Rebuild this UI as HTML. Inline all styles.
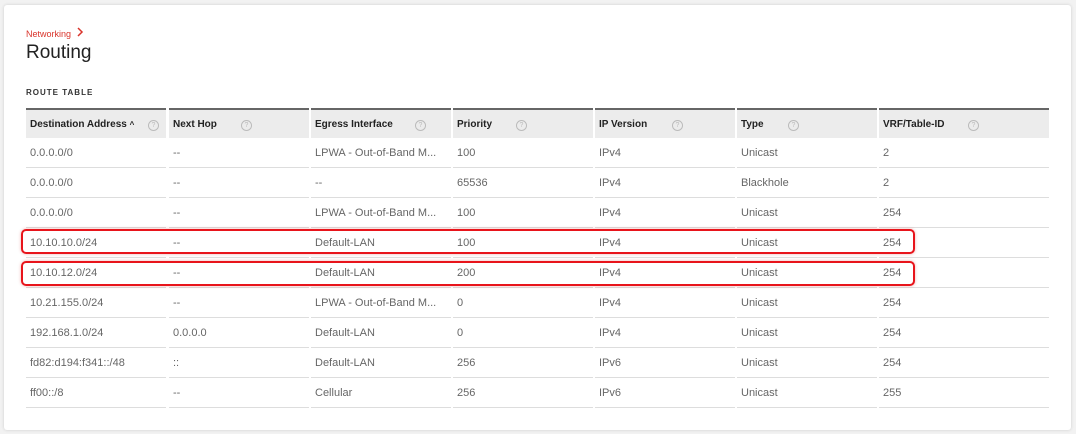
<html><head><style>
body{margin:0;background:#f2f2f2;font-family:"Liberation Sans",Arial,sans-serif;width:1076px;height:434px;overflow:hidden;position:relative}
.card{position:absolute;left:4px;top:5px;width:1067px;height:425px;background:#fff;border-radius:3px;box-shadow:0 0 3px rgba(0,0,0,.15)}
.bc{position:absolute;left:26px;top:29px;font-size:9px;color:#d9342b}
.bc svg{position:absolute;left:50px;top:-2px}
h1{position:absolute;left:26px;top:42px;margin:0;font-size:19px;font-weight:normal;color:#222}
.rt{position:absolute;left:26px;top:88px;font-size:8px;font-weight:bold;letter-spacing:1px;color:#333}
.col{position:absolute;top:108px;width:140px}
.h{height:28px;border-top:2px solid #666;background:#ececec;font-size:10px;font-weight:bold;color:#222;line-height:30px;padding-left:4px;position:relative}
.q{position:absolute;top:10px;width:9px;height:9px;border:1px solid #bbb;border-radius:50%;font-size:7px;line-height:9px;text-align:center;color:#bbb;font-weight:normal}
.c{height:29px;border-bottom:1px solid #ddd;font-size:11px;color:#666;line-height:30px;padding-left:4px;white-space:nowrap;overflow:hidden}
.red{position:absolute;left:21px;width:890px;height:21px;border:2px solid #e8141b;border-radius:5px;box-shadow:0 0 3px rgba(200,0,0,.3)}
</style></head><body><div class="card"></div>
<div class="bc">Networking<svg width="8" height="10" viewBox="0 0 8 10"><path d="M2 1l4 4-4 4" stroke="#d9342b" stroke-width="1.5" fill="none"/></svg></div>
<h1>Routing</h1><div class="rt">ROUTE TABLE</div>
<div class="col" style="left:26px"><div class="h">Destination Address <span style="font-size:8px">^</span><span class="q" style="left:122px">?</span></div>
<div class="c">0.0.0.0/0</div><div class="c">0.0.0.0/0</div><div class="c">0.0.0.0/0</div><div class="c">10.10.10.0/24</div><div class="c">10.10.12.0/24</div><div class="c">10.21.155.0/24</div><div class="c">192.168.1.0/24</div><div class="c">fd82:d194:f341::/48</div><div class="c">ff00::/8</div></div>
<div class="col" style="left:169px"><div class="h">Next Hop<span class="q" style="left:72px">?</span></div>
<div class="c">--</div><div class="c">--</div><div class="c">--</div><div class="c">--</div><div class="c">--</div><div class="c">--</div><div class="c">0.0.0.0</div><div class="c">::</div><div class="c">--</div></div>
<div class="col" style="left:311px"><div class="h">Egress Interface<span class="q" style="left:104px">?</span></div>
<div class="c">LPWA - Out-of-Band M...</div><div class="c">--</div><div class="c">LPWA - Out-of-Band M...</div><div class="c">Default-LAN</div><div class="c">Default-LAN</div><div class="c">LPWA - Out-of-Band M...</div><div class="c">Default-LAN</div><div class="c">Default-LAN</div><div class="c">Cellular</div></div>
<div class="col" style="left:453px"><div class="h">Priority<span class="q" style="left:63px">?</span></div>
<div class="c">100</div><div class="c">65536</div><div class="c">100</div><div class="c">100</div><div class="c">200</div><div class="c">0</div><div class="c">0</div><div class="c">256</div><div class="c">256</div></div>
<div class="col" style="left:595px"><div class="h">IP Version<span class="q" style="left:77px">?</span></div>
<div class="c">IPv4</div><div class="c">IPv4</div><div class="c">IPv4</div><div class="c">IPv4</div><div class="c">IPv4</div><div class="c">IPv4</div><div class="c">IPv4</div><div class="c">IPv6</div><div class="c">IPv6</div></div>
<div class="col" style="left:737px"><div class="h">Type<span class="q" style="left:51px">?</span></div>
<div class="c">Unicast</div><div class="c">Blackhole</div><div class="c">Unicast</div><div class="c">Unicast</div><div class="c">Unicast</div><div class="c">Unicast</div><div class="c">Unicast</div><div class="c">Unicast</div><div class="c">Unicast</div></div>
<div class="col" style="left:879px;width:170px"><div class="h">VRF/Table-ID<span class="q" style="left:89px">?</span></div>
<div class="c">2</div><div class="c">2</div><div class="c">254</div><div class="c">254</div><div class="c">254</div><div class="c">254</div><div class="c">254</div><div class="c">254</div><div class="c">255</div></div>
<div class="red" style="top:229px"></div><div class="red" style="top:261px"></div>
</body></html>
